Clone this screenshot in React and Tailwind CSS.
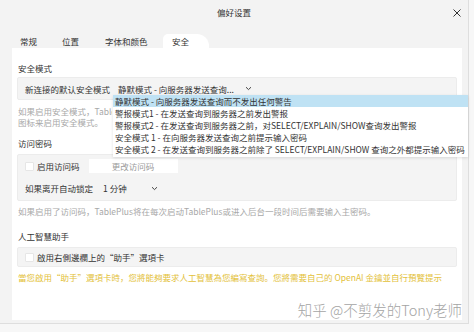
import React from "react";

function Chevron({ className = "" }) {
  return (
    <svg className={className} width="7" height="5" viewBox="0 0 7 5" fill="none">
      <path d="M1 1.2 L3.5 3.6 L6 1.2" stroke="#444" strokeWidth="1" />
    </svg>
  );
}

function Checkbox() {
  return <div className="w-[9px] h-[9px] bg-white border border-[#e6e6e6] rounded-[1px]" />;
}

export default function App() {
  const tabs = [
    { label: "常规", w: "w-[42px]" },
    { label: "位置", w: "w-[43px]" },
    { label: "字体和颜色", w: "w-[67px]" },
  ];
  const options = [
    "静默模式 - 向服务器发送查询而不发出任何警告",
    "警报模式1 - 在发送查询到服务器之前发出警报",
    "警报模式2 - 在发送查询到服务器之前，对SELECT/EXPLAIN/SHOW查询发出警报",
    "安全模式 1 - 在向服务器发送查询之前提示输入密码",
    "安全模式 2 - 在发送查询到服务器之前除了 SELECT/EXPLAIN/SHOW 查询之外都提示输入密码",
  ];
  return (
    <div className="w-[474px] h-[332px] bg-[#f7f7f7] overflow-hidden font-['Noto_Sans_CJK_SC',sans-serif] text-[8.5px] leading-[12px] text-[#333]">
      <div className="relative w-[469px] h-[324px] bg-[#f3f3f3] border-r border-b border-[#dedede] flex flex-col">
        {/* title bar */}
        <div className="relative h-[34px] flex items-start justify-center pt-[6px]">
          <span className="text-[#333]">偏好设置</span>
          <svg className="absolute left-[453px] top-[9px]" width="8" height="8" viewBox="0 0 8 8">
            <path d="M0.5 0.5 L7.5 7.5 M7.5 0.5 L0.5 7.5" stroke="#333" strokeWidth="1" />
          </svg>
        </div>
        {/* tabs */}
        <div className="flex h-[14px] pl-[11px]">
          {tabs.map((t) => (
            <div key={t.label} className={`${t.w} pl-[9px] flex items-center text-[#333]`}>
              {t.label}
            </div>
          ))}
          <div className="w-[46px] pl-[9px] flex items-center bg-white rounded-tl-[5px] rounded-tr-[12px]">
            安全
          </div>
        </div>
        {/* panel */}
        <div className="ml-[12px] w-[450px] h-[272px] bg-white px-[5px] pt-[14px] flex flex-col">
          <div className="pl-[1px]">安全模式</div>
          <div className="mt-[3px] h-[23px] bg-[#f4f4f4] border border-[#ececec] rounded-[2px] flex items-center pl-[7px]">
            <span>新连接的默认安全模式</span>
            <div className="ml-[8px] flex items-center">
              <span>静默模式 - 向服务器发送查询...</span>
              <Chevron className="ml-[11px]" />
            </div>
          </div>
          <div className="mt-[6px] pl-[1px] w-[95px] overflow-hidden whitespace-nowrap leading-[11px] text-[#a8a8a8]">
            <div>如果启用安全模式，TablePlus将在执行查询之前要求确认</div>
            <div>图标来启用安全模式。</div>
          </div>
          <div className="mt-[9px] pl-[1px]">访问密码</div>
          <div className="mt-[5px] h-[47px] bg-[#f4f4f4] border border-[#ececec] rounded-[2px] flex flex-col pl-[7px] pt-[4px]">
            <div className="flex items-center h-[14px]">
              <Checkbox />
              <span className="ml-[3px]">启用访问码</span>
              <div className="ml-[9px] w-[89px] h-[14px] bg-white flex items-center justify-center text-[#9a9a9a]">
                更改访问码
              </div>
            </div>
            <div className="flex items-center mt-[9px]">
              <span>如果离开自动锁定</span>
              <span className="ml-[10px]">1 分钟</span>
              <Chevron className="ml-[24px]" />
            </div>
          </div>
          <div className="mt-[4px] pl-[1px] text-[#a8a8a8]">
            如果启用了访问码，TablePlus将在每次启动TablePlus或进入后台一段时间后需要输入主密码。
          </div>
          <div className="mt-[13px] pl-[1px]">人工智慧助手</div>
          <div className="mt-[5px] h-[20px] bg-[#f4f4f4] border border-[#ececec] rounded-[2px] flex items-center pl-[7px]">
            <Checkbox />
            <span className="ml-[3px]">啟用右側邊欄上的“助手”選項卡</span>
          </div>
          <div className="mt-[4px] pl-[1px] text-[#e3c13a]">
            當您啟用“助手”選項卡時，您將能夠要求人工智慧為您編寫查詢。您將需要自己的 OpenAI 金鑰並自行預覽提示
          </div>
        </div>

        {/* dropdown overlay */}
        <div className="absolute left-[113px] top-[95px] w-[355px] bg-white shadow-[0_1px_3px_rgba(0,0,0,0.12)] flex flex-col">
          {options.map((o, i) => (
            <div
              key={o}
              className={`h-[12px] pl-[2px] flex items-center whitespace-nowrap ${i === 0 ? "bg-[#bfe2f4]" : ""}`}
            >
              {o}
            </div>
          ))}
          <div className="h-[2px]" />
        </div>

        {/* watermark */}
        <div className="absolute right-[6px] top-[300px] text-[14.5px] leading-[20px] font-light text-[#a4a4a4] whitespace-nowrap">
          知乎 @不剪发的Tony老师
        </div>
      </div>
    </div>
  );
}
